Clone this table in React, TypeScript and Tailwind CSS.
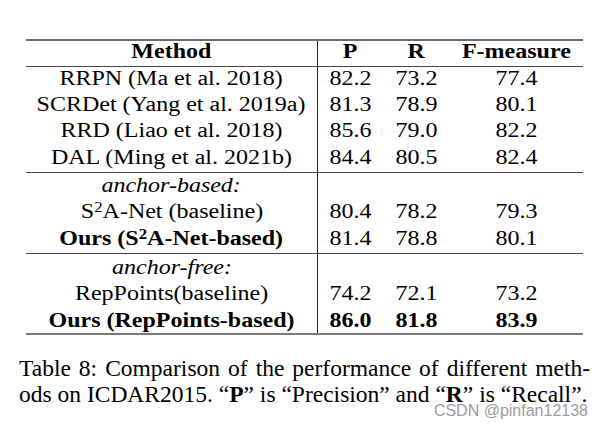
import React from 'react';

type Row = { method: React.ReactNode; p?: string; r?: string; f?: string; bold?: 'all' | 'method' };

function W({ children }: { children: React.ReactNode }) {
  return <span className="inline-block scale-x-[1.2] whitespace-nowrap">{children}</span>;
}

const S2 = <sup className="relative -top-[0.45em] align-baseline text-[14px] leading-none">2</sup>;

const blocks: { rows: Row[]; h: string; lh: string }[] = [
  {
    h: 'h-[26.2px]',
    lh: 'leading-[22px]',
    rows: [
      { method: 'RRPN (Ma et al. 2018)', p: '82.2', r: '73.2', f: '77.4' },
      { method: 'SCRDet (Yang et al. 2019a)', p: '81.3', r: '78.9', f: '80.1' },
      { method: 'RRD (Liao et al. 2018)', p: '85.6', r: '79.0', f: '82.2' },
      { method: 'DAL (Ming et al. 2021b)', p: '84.4', r: '80.5', f: '82.4' },
    ],
  },
  {
    h: 'h-[26.6px]',
    lh: 'leading-[24.5px]',
    rows: [
      { method: <i>anchor-based:</i> },
      { method: <>S{S2}A-Net (baseline)</>, p: '80.4', r: '78.2', f: '79.3' },
      { method: <>Ours (S{S2}A-Net-based)</>, p: '81.4', r: '78.8', f: '80.1', bold: 'method' },
    ],
  },
  {
    h: 'h-[26.6px]',
    lh: 'leading-[26.5px]',
    rows: [
      { method: <i>anchor-free:</i> },
      { method: 'RepPoints(baseline)', p: '74.2', r: '72.1', f: '73.2' },
      { method: 'Ours (RepPoints-based)', p: '86.0', r: '81.8', f: '83.9', bold: 'all' },
    ],
  },
];

const cols = 'grid grid-cols-[292px_65px_66px_134px]';

export default function App() {
  return (
    <div className="relative w-[604px] h-[430px] bg-white text-black font-['Liberation_Serif','Times_New_Roman',serif] overflow-hidden">
      <div className="pt-[39px] pl-[26px]">
        <div className="w-[557px] text-[20px]">
          {/* header */}
          <div className={`${cols} border-t-2 border-t-[#6b6b6b] border-b border-b-[#444] font-bold`}>
            <div className="h-[25px] leading-[21px] text-center border-r border-r-[#222]"><W>Method</W></div>
            <div className="leading-[21px] text-center"><W>P</W></div>
            <div className="leading-[21px] text-center"><W>R</W></div>
            <div className="leading-[21px] text-center"><W>F-measure</W></div>
          </div>

          {blocks.map((b, bi) => (
            <div
              key={bi}
              className={bi === blocks.length - 1 ? 'border-b-2 border-b-[#7a7a7a]' : 'border-b border-b-[#444]'}
            >
              {b.rows.map((row, ri) => {
                const num = `${b.lh} text-center ${row.bold === 'all' ? 'font-bold' : ''}`;
                return (
                  <div key={ri} className={cols}>
                    <div
                      className={`${b.h} ${b.lh} text-center border-r border-r-[#222] ${
                        row.bold ? 'font-bold' : ''
                      }`}
                    >
                      <W>{row.method}</W>
                    </div>
                    <div className={num}>{row.p && <W>{row.p}</W>}</div>
                    <div className={num}>{row.r && <W>{row.r}</W>}</div>
                    <div className={num}>{row.f && <W>{row.f}</W>}</div>
                  </div>
                );
              })}
            </div>
          ))}
        </div>
      </div>

      <div className="mt-[20px] ml-[19px] w-[571px] text-[23.5px] leading-[26px]">
        <div className="text-justify [text-align-last:justify] whitespace-nowrap">
          Table 8: Comparison of the performance of different meth-
        </div>
        <div className="whitespace-nowrap">
          ods on ICDAR2015. “<b>P</b>” is “Precision” and “<b>R</b>” is “Recall”.
        </div>
      </div>

      {/* watermark */}
      <div className="absolute right-[16px] top-[403px] text-[16px] leading-[16px] text-[#9c9c9c] font-['Liberation_Sans',Arial,sans-serif]">
        CSDN @pinfan12138
      </div>
    </div>
  );
}
